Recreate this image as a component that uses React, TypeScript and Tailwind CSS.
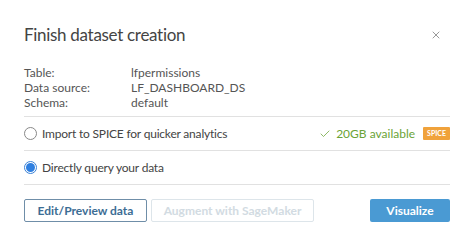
import { X, Check } from 'lucide-react'

const rows = [
  ['Table:', 'lfpermissions'],
  ['Data source:', 'LF_DASHBOARD_DS'],
  ['Schema:', 'default'],
]

export default function App() {
  return (
    <div className="w-[474px] h-[244px] bg-white px-6 pt-[23px] text-[#545b64]" style={{ fontFamily: 'Lato, sans-serif' }}>
      <div className="flex items-center justify-between h-6">
        <h2 className="text-[17px] leading-6 tracking-[-0.3px] text-[#444]">Finish dataset creation</h2>
        <X size={12} strokeWidth={1.5} className="text-[#777] mr-[8px]" />
      </div>

      <div className="mt-[18px] text-[12px] leading-[15px] text-[#555]">
        {rows.map(([k, v]) => (
          <div key={k} className="flex">
            <span className="w-[107px]">{k}</span>
            <span>{v}</span>
          </div>
        ))}
      </div>

      <div className="mt-[6px] border-t border-[#e1e1e1]" />

      <div className="flex items-center h-[34px] border-b border-[#e1e1e1]">
        <span className="w-[13px] h-[13px] rounded-full border border-[#888] bg-white" />
        <span className="ml-[5px] text-[12px] tracking-[-0.2px] text-[#444]">Import to SPICE for quicker analytics</span>
        <span className="ml-auto flex items-center text-[12px] text-[#6aa336]">
          <Check size={12} strokeWidth={1.5} className="mr-[5px]" />
          20GB available
        </span>
        <span className="ml-[8px] bg-[#f0a23b] text-white text-[7px] font-bold px-[4px] h-[13px] leading-[13px] rounded-[1px]">SPICE</span>
      </div>

      <div className="flex items-center h-[34px] border-b border-[#e1e1e1]">
        <span className="w-[13px] h-[13px] rounded-full border border-[#3b82d6] bg-white flex items-center justify-center">
          <span className="w-[9px] h-[9px] rounded-full bg-[#2f7fe0]" />
        </span>
        <span className="ml-[5px] text-[12px] tracking-[-0.2px] text-[#444]">Directly query your data</span>
      </div>

      <div className="flex items-center mt-[14px]">
        <button className="w-[123px] h-[23px] border border-[#6f8ea8] rounded-[2px] text-[12px] font-bold text-[#3c6d94]">Edit/Preview data</button>
        <button className="ml-[4px] w-[163px] h-[23px] border border-[#dde5ea] rounded-[2px] text-[12px] font-bold text-[#d2dbe2]">Augment with SageMaker</button>
        <button className="ml-auto w-[80px] h-[23px] rounded-[2px] bg-[#4a9ad3] text-[12px] font-bold text-white">Visualize</button>
      </div>
    </div>
  )
}
